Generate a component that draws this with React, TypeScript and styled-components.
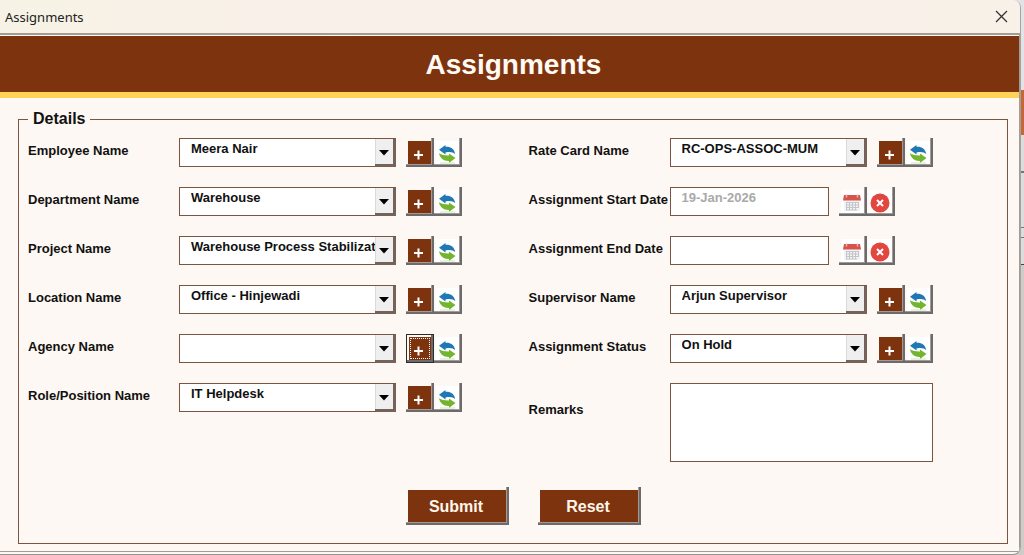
import React from "react";
import styled, { createGlobalStyle, css } from "styled-components";

const colors = {
  brown: "#7e330f",
  line: "#7a5641",
  cream: "#fdf8f3",
  shade: "#6c6a6a",
  yellow: "#ffd257",
};

const GlobalStyle = createGlobalStyle`
  *, *::before, *::after { box-sizing: border-box; }
  body {
    margin: 0;
    font-family: "Liberation Sans", Arial, sans-serif;
    color: #111;
  }
`;

const Desktop = styled.div`
  min-height: 100vh;
  padding-right: 3px;
  display: flex;
  background: linear-gradient(
    #e3e3e6 0 90px,
    #c4683a 90px 135px,
    #dcdcdc 135px 171px,
    #777 171px 173px,
    #dcdcdc 173px 227px,
    #777 227px 228px,
    #dcdcdc 228px 237px,
    #777 237px 238px,
    #dcdcdc 238px 264px,
    #444 264px 265px,
    #cfcbc9 265px
  );
`;

const Window = styled.main`
  flex: 1;
  min-width: 0;
  display: flex;
  flex-direction: column;
  background: ${colors.cream};
  border-right: 1px solid #a5a2a0;
  border-bottom: 1px solid #979391;
  border-radius: 0 8px 8px 0;
  overflow: hidden;
`;

const TitleBar = styled.header`
  display: flex;
  align-items: center;
  justify-content: space-between;
  height: 33px;
  padding: 0 12px 0 5px;
  background: linear-gradient(90deg, #f7f2e6, #f9f0ea 40%, #f8f1e8);
  font: 13px/20px "Noto Sans", "Open Sans", sans-serif;
  color: #222;
`;

const CloseButton = styled.button`
  display: flex;
  padding: 0;
  border: 0;
  background: none;
  color: #333;
`;

const Client = styled.div`
  flex: 1;
  display: flex;
  flex-direction: column;
  margin-bottom: 2px;
  border: solid #a29c95;
  border-width: 2px 1px 1px 0;
  padding-top: 1px;
`;

const Banner = styled.h1`
  margin: 0;
  padding: 10px 0 8px;
  background: ${colors.brown};
  border-bottom: 6px solid ${colors.yellow};
  color: #fffaf3;
  font-size: 28px;
  line-height: 38px;
  text-align: center;
  padding-left: 8px;
`;

const Form = styled.form`
  flex: 1;
  padding: 12px 11px 7px 18px;
`;

const Details = styled.fieldset`
  min-width: 0;
  margin: 0;
  padding: 10px 9px 18px;
  border: 1px solid ${colors.line};
`;

const Legend = styled.legend`
  padding: 0 5px;
  font-size: 16px;
  line-height: 18px;
  font-weight: bold;
`;

const Columns = styled.div`
  display: grid;
  grid-template-columns: minmax(0, 500fr) minmax(0, 469fr);
`;

const Column = styled.div<{ $labelWidth: number; $gutter: number }>`
  display: grid;
  grid-template-columns: ${(p) => p.$labelWidth}px minmax(0, 1fr);
  grid-auto-rows: minmax(29px, auto);
  row-gap: 20px;
  align-content: start;
  padding-right: ${(p) => p.$gutter}px;
`;

const Label = styled.label<{ $tall?: boolean }>`
  padding-top: ${(p) => (p.$tall ? 18 : 4)}px;
  font-size: 13px;
  line-height: 18px;
  font-weight: bold;
  white-space: nowrap;
`;

const Controls = styled.div<{ $short?: boolean }>`
  display: flex;
  gap: 10px;
  height: 29px;
  padding-right: ${(p) => (p.$short ? 38 : 0)}px;
`;

const fieldBox = css`
  margin: 0;
  border: 1px solid ${colors.line};
  border-radius: 0;
  background: #fff;
  color: #111;
  font: bold 13px/16px "Liberation Sans", Arial, sans-serif;
  outline: none;
`;

const SelectFrame = styled.div`
  position: relative;
  flex: 1;
  min-width: 0;
  display: flex;
`;

const Select = styled.select`
  ${fieldBox}
  appearance: none;
  width: 100%;
  padding: 0 20px 8px 11px;
`;

const DropArrow = styled.span`
  position: absolute;
  top: 1px;
  right: 0;
  bottom: 0;
  width: 21px;
  display: flex;
  align-items: center;
  justify-content: center;
  padding-top: 2px;
  background: #f0efef;
  border: solid #756359;
  border-width: 0 3px 3px 0;
  box-shadow: inset 1px 0 #ddd9d6;
  pointer-events: none;
`;

const DateInput = styled.input`
  ${fieldBox}
  flex: 1;
  min-width: 0;
  padding: 0 11px 8px;
  &:disabled { color: #a9a9a9; }
`;

const Remarks = styled.textarea`
  ${fieldBox}
  display: block;
  width: 100%;
  height: 79px;
  padding: 2px 11px;
  resize: none;
`;

const raised = css`
  border: 0;
  border-radius: 0;
  padding: 4px 4px 2px 2px;
  box-shadow:
    inset -2px -2px ${colors.shade},
    inset -3px -3px #a39a94,
    inset 2px 3px ${colors.cream};
`;

const ButtonPair = styled.div`
  display: flex;
`;

const IconButton = styled.button<{ $filled?: boolean; $focused?: boolean }>`
  ${raised}
  display: flex;
  align-items: center;
  justify-content: center;
  width: 28px;
  height: 29px;
  background: ${(p) => (p.$filled ? colors.brown : "#fff")};
  color: #fff;
  ${(p) =>
    p.$focused &&
    css`
      box-shadow:
        inset 0 0 0 1px #2b2b2b,
        inset -3px -3px ${colors.shade},
        inset 3px 3px ${colors.cream};
      outline: 1px dotted #fff;
      outline-offset: -5px;
    `}
`;

const Actions = styled.div`
  display: flex;
  justify-content: center;
  gap: 29px;
  padding: 25px 0 0 20px;
`;

const ActionButton = styled.button`
  ${raised}
  width: 103px;
  height: 38px;
  background: ${colors.brown};
  color: #fff6ea;
  font: bold 16px/20px "Liberation Sans", Arial, sans-serif;
`;

const PlusIcon = () => (
  <svg width="18" height="18" viewBox="0 0 18 18" aria-hidden="true">
    <path d="M4 10h9M8.500 5.500v9" stroke="#fff" strokeWidth="2" fill="none" />
  </svg>
);

const RefreshIcon = () => (
  <svg width="20" height="20" viewBox="0 0 20 20" aria-hidden="true">
    <path d="M2 5.800 8.500 1v1.800c5-.4 8.700 1.900 9.700 7.200-2-1.800-5-2.500-9.700-1.600v2Z" fill="#1f78b4" />
    <path d="M18.500 14 12 9.500v2C8 11.600 4.800 11.100 2 9.300c.8 5 5 8 10 7.700v2Z" fill="#74b52f" />
    <path d="M3 19h15" stroke="#cfe3bf" strokeWidth="1" />
  </svg>
);

const CalendarIcon = () => (
  <svg width="20" height="20" viewBox="0 0 20 20" aria-hidden="true">
    <path d="M2 7h16v11H2z" fill="#f3f3f3" />
    <path d="M2 2h16l1 5.500H1Z" fill="#d5544b" />
    <path d="M4.500 1.500v3M15.500 1.500v3" stroke="#f1b3ab" strokeWidth="1.500" />
    <path
      d="M4 9.500h13M4 12h13M4 14.500h13M4 17h11M4.500 9v8M7.500 9v8M10.500 9v8M13.500 9v8M16.500 9v6"
      stroke="#c3c5c9"
      strokeWidth="1"
    />
  </svg>
);

const ClearIcon = () => (
  <svg width="20" height="20" viewBox="0 0 20 20" aria-hidden="true">
    <circle cx="10" cy="10" r="9.500" fill="#e2463f" />
    <path d="m7 7 6 6m0-6-6 6" stroke="#fff" strokeWidth="2" />
  </svg>
);

interface FieldProps {
  id: string;
  label: string;
  value?: string;
}

const LookupField = ({ id, label, value = "", focused }: FieldProps & { focused?: boolean }) => (
  <>
    <Label htmlFor={id}>{label}</Label>
    <Controls>
      <SelectFrame>
        <Select id={id} defaultValue={value}>
          <option value={value}>{value}</option>
        </Select>
        <DropArrow>
          <svg width="10" height="6" viewBox="0 0 10 6" aria-hidden="true">
            <path d="M0 0h10L5 5.500Z" fill="#000" />
          </svg>
        </DropArrow>
      </SelectFrame>
      <ButtonPair>
        <IconButton type="button" $filled $focused={focused} aria-label={`Add ${label}`}>
          <PlusIcon />
        </IconButton>
        <IconButton type="button" aria-label={`Refresh ${label}`}>
          <RefreshIcon />
        </IconButton>
      </ButtonPair>
    </Controls>
  </>
);

const DateField = ({ id, label, value = "" }: FieldProps) => (
  <>
    <Label htmlFor={id}>{label}</Label>
    <Controls $short>
      <DateInput id={id} type="text" defaultValue={value} disabled />
      <ButtonPair>
        <IconButton type="button" aria-label={`Pick ${label}`}>
          <CalendarIcon />
        </IconButton>
        <IconButton type="button" aria-label={`Clear ${label}`}>
          <ClearIcon />
        </IconButton>
      </ButtonPair>
    </Controls>
  </>
);

export default function App() {
  return (
    <>
      <GlobalStyle />
      <Desktop>
        <Window>
          <TitleBar>
            <span>Assignments</span>
            <CloseButton type="button" aria-label="Close">
              <svg width="13" height="13" viewBox="0 0 13 13" aria-hidden="true">
                <path d="m1 1 11 11m0-11L1 12" stroke="currentColor" strokeWidth="1.300" />
              </svg>
            </CloseButton>
          </TitleBar>
          <Client>
            <Banner>Assignments</Banner>
            <Form onSubmit={(e) => e.preventDefault()}>
              <Details>
                <Legend>Details</Legend>
                <Columns>
                  <Column $labelWidth={151} $gutter={67}>
                    <LookupField id="employee" label="Employee Name" value="Meera Nair" />
                    <LookupField id="department" label="Department Name" value="Warehouse" />
                    <LookupField id="project" label="Project Name" value="Warehouse Process Stabilization" />
                    <LookupField id="location" label="Location Name" value="Office - Hinjewadi" />
                    <LookupField id="agency" label="Agency Name" focused />
                    <LookupField id="role" label="Role/Position Name" value="IT Helpdesk" />
                  </Column>
                  <Column $labelWidth={141} $gutter={65}>
                    <LookupField id="rate-card" label="Rate Card Name" value="RC-OPS-ASSOC-MUM" />
                    <DateField id="start-date" label="Assignment Start Date" value="19-Jan-2026" />
                    <DateField id="end-date" label="Assignment End Date" />
                    <LookupField id="supervisor" label="Supervisor Name" value="Arjun Supervisor" />
                    <LookupField id="status" label="Assignment Status" value="On Hold" />
                    <Label htmlFor="remarks" $tall>
                      Remarks
                    </Label>
                    <Remarks id="remarks" />
                  </Column>
                </Columns>
                <Actions>
                  <ActionButton type="submit">Submit</ActionButton>
                  <ActionButton type="reset">Reset</ActionButton>
                </Actions>
              </Details>
            </Form>
          </Client>
        </Window>
      </Desktop>
    </>
  );
}
